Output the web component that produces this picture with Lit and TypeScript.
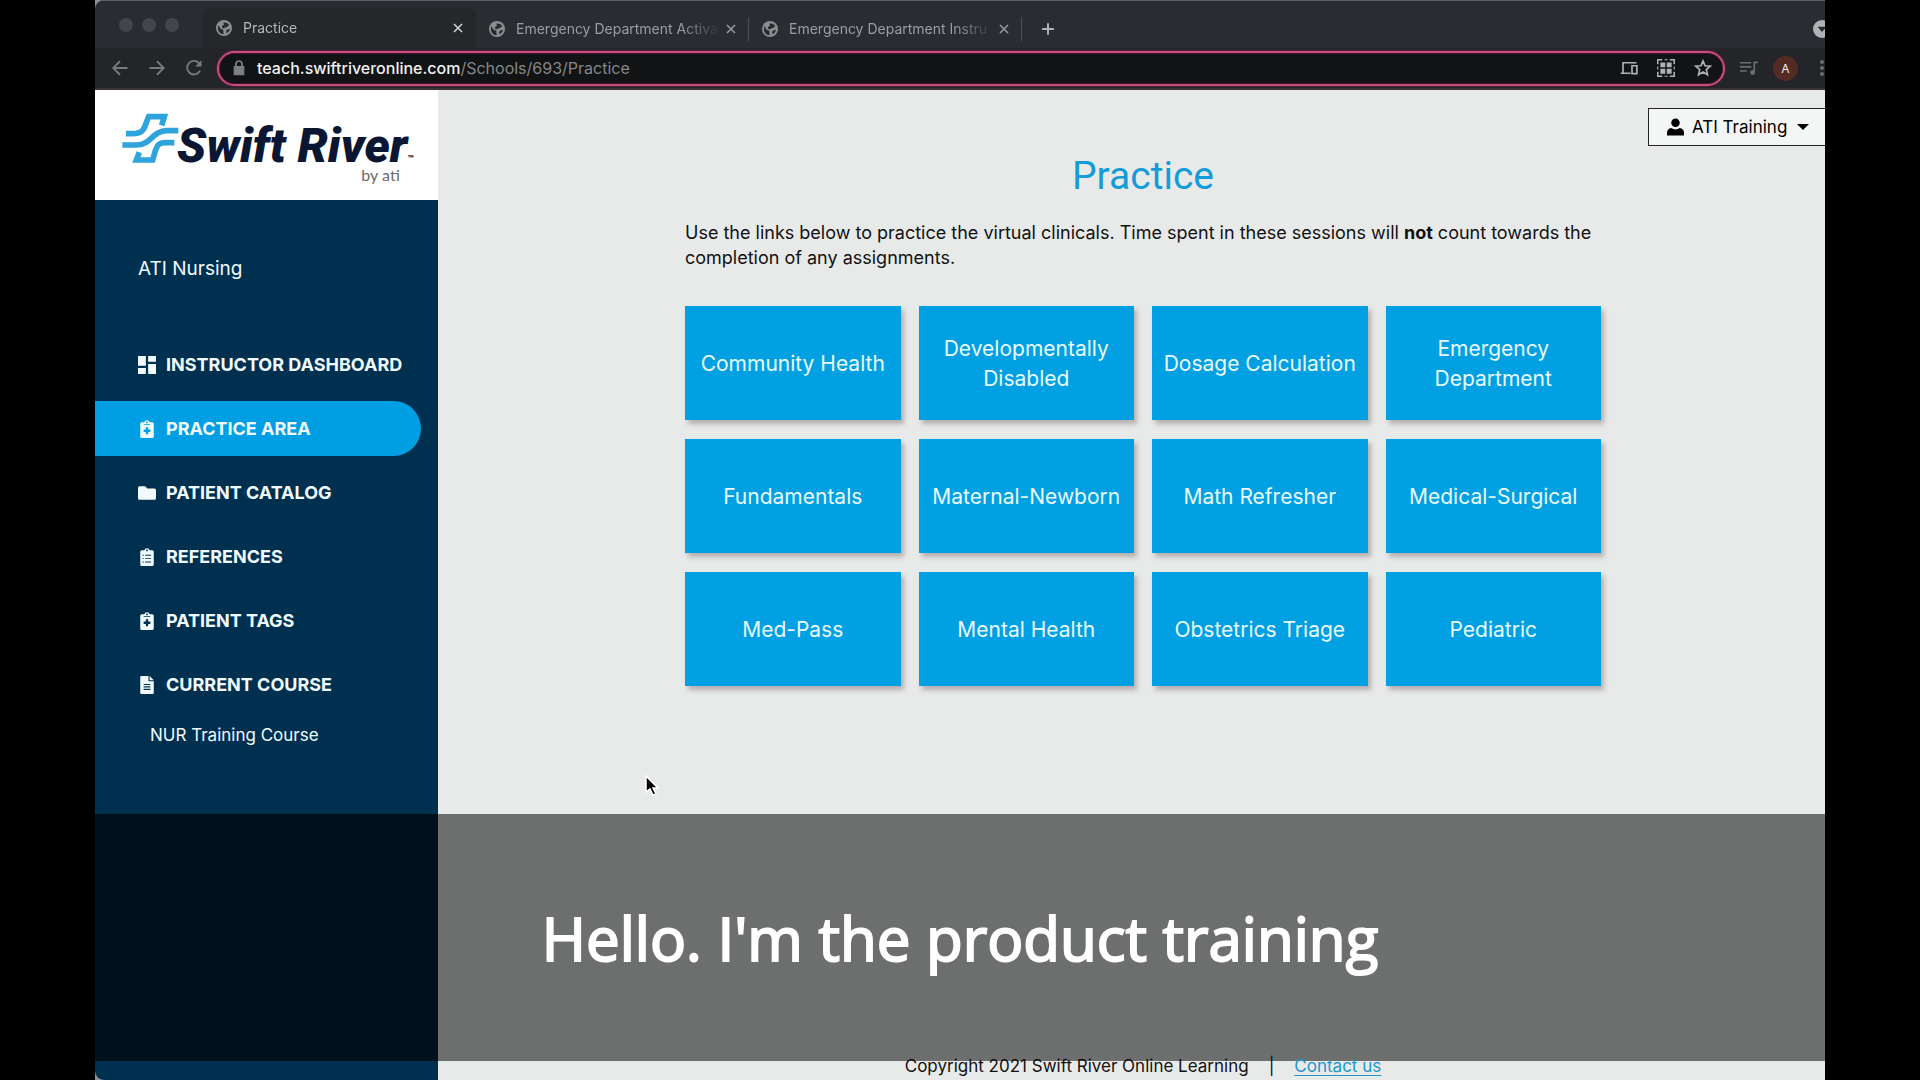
import { LitElement, html, svg, css } from "lit";
import { customElement, property } from "lit/decorators.js";
import { classMap } from "lit/directives/class-map.js";

const icons: Record<string, unknown> = {
  globe: svg`<circle cx="12" cy="12" r="12" fill="currentColor"/><path d="M3 8c3 2 2 5 6 6s1 4 3 7c-5 1-9-4-9-8zM11 4c3-1 7 0 9 4-2 0-2 3-5 3s-2 3-5 1 0-4 2-5zM16 15c2-1 4-2 5-1-1 3-3 5-5 6-1-2-1-4 0-5z" fill="#292a2d"/>`,
  close: svg`<path d="M4 4l16 16M20 4L4 20" stroke="currentColor" stroke-width="3" fill="none"/>`,
  plus: svg`<path d="M12 2v20M2 12h20" stroke="currentColor" stroke-width="3.400" fill="none"/>`,
  back: svg`<path d="M22 12H3M12 3l-9 9 9 9" stroke="currentColor" stroke-width="2.4" fill="none"/>`,
  forward: svg`<path d="M2 12h19M12 3l9 9-9 9" stroke="currentColor" stroke-width="2.4" fill="none"/>`,
  reload: svg`<path d="M20 15.500A9 9 0 1 1 18.500 5.500L21 8" stroke="currentColor" stroke-width="2.4" fill="none"/><path d="M22 1.500V10h-8.500z" fill="currentColor"/>`,
  lock: svg`<path d="M4 9h16v14H4z" fill="currentColor"/><path d="M7.500 10V6a4.500 4.500 0 0 1 9 0v4" stroke="currentColor" stroke-width="2.6" fill="none"/>`,
  devices: svg`<path d="M4 18V5h18M1 19h13M16 9h6.500v10.500H16z" stroke="currentColor" stroke-width="2.2" fill="none"/>`,
  qr: svg`<path d="M1 7V1h6M17 1h6v6M23 17v6h-6M7 23H1v-6" stroke="currentColor" stroke-width="2" fill="none"/><path d="M10 1h4M10 23h4M1 10v4M23 10v4" stroke="currentColor" stroke-width="1.500" fill="none"/><path d="M4.500 4.500h6.500V11H4.500zM13 4.500h6.500V11H13zM4.500 13h6.500v6.500H4.500zM13 13h6.500v6.500H13z" fill="currentColor"/>`,
  star: svg`<path d="M12 2.500l2.700 6.500 7 .6-5.300 4.600 1.600 6.900-6-3.700-6 3.700 1.600-6.900L2.300 9.600l7-.6z" stroke="currentColor" stroke-width="2.200" fill="none"/>`,
  playlist: svg`<path d="M0 5h15M0 10.500h15M0 16h9M19 18V4.500h5" stroke="currentColor" stroke-width="2.200" fill="none"/><circle cx="16.800" cy="18" r="3.200" fill="currentColor"/>`,
  dots: svg`<circle cx="12" cy="4" r="2.600" fill="currentColor"/><circle cx="12" cy="12" r="2.600" fill="currentColor"/><circle cx="12" cy="20" r="2.600" fill="currentColor"/>`,
  search: svg`<circle cx="12" cy="12" r="12" fill="currentColor"/><path d="M6 9h12l-6 7z" fill="#292a2d"/>`,
  dashboard: svg`<path d="M0 0h10.500v13H0zM13.500 0H24v7.500H13.500zM0 16h10.500v8H0zM13.500 10.500H24V24H13.500z" fill="currentColor"/>`,
  clipboardPlus: svg`<path fill-rule="evenodd" d="M5 3h3.500a3.600 3.600 0 0 1 7 0H19a2 2 0 0 1 2 2v17a2 2 0 0 1-2 2H5a2 2 0 0 1-2-2V5a2 2 0 0 1 2-2zM12 2a1.200 1.200 0 1 0 .01 0zM10.500 9.500v3h-3v3.500h3v3h3v-3h3v-3.500h-3v-3zM7.500 5.500v1h9v-1z" fill="currentColor"/>`,
  folder: svg`<path d="M2 3h7.500l3 3H22a2 2 0 0 1 2 2v11a2 2 0 0 1-2 2H2a2 2 0 0 1-2-2V5a2 2 0 0 1 2-2z" fill="currentColor"/>`,
  clipboardList: svg`<path fill-rule="evenodd" d="M5 3h3.500a3.600 3.600 0 0 1 7 0H19a2 2 0 0 1 2 2v17a2 2 0 0 1-2 2H5a2 2 0 0 1-2-2V5a2 2 0 0 1 2-2zM12 2a1.200 1.200 0 1 0 .01 0zM9.500 9v1.300h8V9zM9.500 13.500v1.300h8v-1.300zM9.500 18v1.300h8V18zM6 9v1.300h1.700V9zM6 13.500v1.300h1.700v-1.300zM6 18v1.300h1.700V18z" fill="currentColor"/>`,
  file: svg`<path fill-rule="evenodd" d="M4.500 0H14v7h7v15.500a1.500 1.500 0 0 1-1.500 1.500h-15A1.500 1.500 0 0 1 3 22.500v-21A1.500 1.500 0 0 1 4.500 0zM7.500 10.500v1.500h9v-1.500zM7.500 13.800v1.500h9v-1.500zM7.500 17v1.500h9V17z" fill="currentColor"/><path d="M15.500 0L21 5.500h-5.500z" fill="currentColor"/>`,
  user: svg`<circle cx="12" cy="6" r="6" fill="currentColor"/><path d="M0 24v-4a7 7 0 0 1 6-6.500 11 11 0 0 0 12 0 7 7 0 0 1 6 6.500v4z" fill="currentColor"/>`,
  caret: svg`<path d="M0 6h24L12 18z" fill="currentColor"/>`,
};

@customElement("ui-icon")
export class UiIcon extends LitElement {
  @property() name = "";
  static styles = css`
    :host { display: block; flex: none; width: 18px; height: 18px; }
    svg { display: block; width: 100%; height: 100%; overflow: visible; }
  `;
  render() {
    return html`<svg viewBox="0 0 24 24" aria-hidden="true">${icons[this.name]}</svg>`;
  }
}

@customElement("browser-chrome")
export class BrowserChrome extends LitElement {
  static styles = css`
    :host { display: block; color: #9a9da1; font-family: Inter, "Liberation Sans", sans-serif; }
    button { all: unset; display: flex; align-items: center; justify-content: center; cursor: pointer; }
    .strip { display: flex; height: 48px; box-sizing: border-box; border-top: 1px solid #5c6165; background: #292c30; }
    .lights { display: flex; flex: none; gap: 9px; width: 84px; padding: 17px 0 0 24px; }
    .light { width: 14px; height: 14px; border-radius: 50%; background: #42464a; }
    .tabs { display: flex; }
    .tab { display: flex; flex: none; align-items: center; box-sizing: border-box; width: 273px; height: 24px; margin-top: 16px; padding: 0 12px 0 13px; }
    .tab.active { height: 40px; margin-top: 7px; background: #25272b; border-radius: 8px 8px 0 0; color: #b4b6b9; }
    .tab ui-icon { width: 16px; height: 16px; color: #8b8e91; }
    .title { flex: 1; min-width: 0; margin: 0 8px 0 11px; overflow: hidden; white-space: nowrap; font-size: 14px; line-height: 20px; mask-image: linear-gradient(90deg, #000 165px, transparent 205px); }
    .tab button ui-icon { width: 12px; height: 12px; color: inherit; }
    .tab.active button { color: #d5d6d8; }
    .divided { border-right: 1px solid #4b4e52; padding-right: 11px; }
    .add { width: 52px; height: 48px; padding-top: 7px; box-sizing: border-box; color: #b0b3b5; }
    .add ui-icon { width: 14px; height: 14px; }
    .spacer { flex: 1; }
    .more { margin: 8px 17px 0 0; color: #b0b3b5; }
    .bar { display: flex; align-items: center; height: 42px; box-sizing: border-box; padding: 0 16px; background: #242529; border-bottom: 2px solid #3d3439; }
    .tools { display: flex; gap: 19px; width: 106px; color: #777a7d; }
    .address { display: flex; flex: 1; align-items: center; box-sizing: border-box; height: 35px; padding: 0 11px; border: 2px solid #c24f7e; box-shadow: inset 0 0 0 1px #4a102b, 0 0 0 1px #4f2036; border-radius: 18px; background: #111315; }
    .lock { width: 16px; height: 16px; margin: 0 10px 0 1px; color: #7d7f82; }
    .url { flex: 1; font-size: 16px; line-height: 24px; color: #85878a; }
    .url b { font-weight: 500; color: #f0f1f2; }
    .actions { display: flex; gap: 19px; color: #b0b3b5; }
    .after { display: flex; align-items: center; gap: 15px; padding: 0 1px 0 15px; color: #6b6e71; }
    .avatar { width: 25px; height: 25px; border-radius: 50%; background: #542a24; color: #eee; font-size: 12px; }
  `;
  private tabs = ["Practice", "Emergency Department Activa", "Emergency Department Instru"];
  render() {
    return html`
      <div class="strip">
        <div class="lights"><span class="light"></span><span class="light"></span><span class="light"></span></div>
        <div class="tabs">
          ${this.tabs.map((title, i) => html`
            <div class=${classMap({ tab: true, active: i === 0, divided: i > 0 })}>
              <ui-icon name="globe"></ui-icon><span class="title">${title}</span>
              <button aria-label="Close tab"><ui-icon name="close"></ui-icon></button>
            </div>`)}
        </div>
        <button class="add" aria-label="New tab"><ui-icon name="plus"></ui-icon></button>
        <span class="spacer"></span>
        <button class="more" aria-label="Search tabs"><ui-icon name="search"></ui-icon></button>
      </div>
      <div class="bar">
        <div class="tools">
          <button aria-label="Back"><ui-icon name="back"></ui-icon></button>
          <button aria-label="Forward"><ui-icon name="forward"></ui-icon></button>
          <button aria-label="Reload"><ui-icon name="reload"></ui-icon></button>
        </div>
        <div class="address">
          <ui-icon class="lock" name="lock"></ui-icon>
          <span class="url"><b>teach.swiftriveronline.com</b>/Schools/693/Practice</span>
          <div class="actions">
            <button aria-label="Send to device"><ui-icon name="devices"></ui-icon></button>
            <button aria-label="QR code"><ui-icon name="qr"></ui-icon></button>
            <button aria-label="Bookmark"><ui-icon name="star"></ui-icon></button>
          </div>
        </div>
        <div class="after">
          <button aria-label="Media"><ui-icon name="playlist"></ui-icon></button>
          <button class="avatar" aria-label="Profile">A</button>
          <button aria-label="Menu"><ui-icon name="dots"></ui-icon></button>
        </div>
      </div>`;
  }
}

@customElement("side-nav")
export class SideNav extends LitElement {
  static styles = css`
    :host { display: block; background: #00304f; color: #f1fbff; }
    .logo { display: flex; height: 110px; box-sizing: border-box; padding: 21px 0 0 26px; background: #fff; }
    .mark { flex: none; width: 58px; height: 52px; }
    .words { display: flex; flex-direction: column; align-items: flex-end; padding-top: 14px; margin-left: -2px; }
    .name { font-family: Roboto, "Liberation Sans", sans-serif; font-size: 48px; line-height: 41px; font-weight: 900; font-style: italic; color: #0b1632; white-space: nowrap; }
    .tm { font-size: 10px; line-height: 10px; font-style: normal; }
    .by { font-family: Lato, sans-serif; font-size: 16px; line-height: 18px; font-weight: 400; color: #6a6a6e; padding-right: 14px; }
    .school { margin: 0; padding: 54px 0 53px 43px; font-size: 19px; line-height: 30px; font-weight: 400; }
    .item { display: flex; align-items: center; gap: 10px; height: 55px; margin: 0 17px 9px 0; padding-left: 43px; border-radius: 0 28px 28px 0; font-size: 18px; font-weight: 700; color: inherit; text-decoration: none; white-space: nowrap; }
    .item.active { background: #009fe3; }
    .course { display: block; padding: 2px 0 0 55px; font-size: 17px; line-height: 24px; color: inherit; text-decoration: none; }
  `;
  private items: [string, string][] = [
    ["dashboard", "INSTRUCTOR DASHBOARD"],
    ["clipboardPlus", "PRACTICE AREA"],
    ["folder", "PATIENT CATALOG"],
    ["clipboardList", "REFERENCES"],
    ["clipboardPlus", "PATIENT TAGS"],
    ["file", "CURRENT COURSE"],
  ];
  render() {
    return html`
      <div class="logo">
        <svg class="mark" viewBox="0 0 174 156" aria-hidden="true">
          <g fill="none" stroke="#2ea3dc" stroke-width="17">
            <path d="M15 68H34C62 68 68 58 74 40L83 17H130L122 43"/>
            <path d="M172 59H138C92 59 92 102 46 102H4"/>
            <path d="M160 95H134C110 95 108 106 102 122L95 147H46L55 124"/>
          </g>
        </svg>
        <div class="words">
          <div class="name">Swift River<span class="tm">™</span></div>
          <div class="by">by ati</div>
        </div>
      </div>
      <h2 class="school">ATI Nursing</h2>
      <nav>
        ${this.items.map(([icon, label], i) => html`
          <a href="#" class=${classMap({ item: true, active: i === 1 })}><ui-icon name=${icon}></ui-icon>${label}</a>`)}
        <a href="#" class="course">NUR Training Course</a>
      </nav>`;
  }
}

@customElement("practice-page")
export class PracticePage extends LitElement {
  static styles = css`
    :host { display: flex; flex-direction: column; align-items: center; position: relative; box-sizing: border-box; padding-top: 62px; background: #e8eaea; color: #111; }
    .user { position: absolute; top: 18px; right: 0; display: flex; align-items: center; box-sizing: border-box; width: 200px; height: 38px; padding: 0 0 0 18px; border: 1px solid #222; background: #f4f6f5; color: #000; font: inherit; font-size: 17px; }
    .user ui-icon { width: 17px; margin-right: 8px; }
    .user .caret { width: 12px; height: 12px; margin: 0 0 0 10px; }
    .content { width: 916px; max-width: 100%; }
    h1 { margin: 0 0 20px; text-align: center; font-family: Roboto, sans-serif; font-size: 39px; line-height: 48px; font-weight: 400; color: #149cd8; }
    p { margin: 0 0 36px; font-size: 18px; line-height: 25px; }
    .cards { display: grid; grid-template-columns: repeat(4, 1fr); grid-auto-rows: 114px; gap: 19px 18px; }
    .card { display: flex; align-items: center; justify-content: center; padding: 2px 10px 0; background: #00a0e3; box-shadow: 3px 4px 5px rgba(90, 60, 60, 0.35); color: #e9fbff; font-size: 21px; line-height: 30px; text-align: center; text-decoration: none; }
    footer { display: flex; margin-top: auto; padding-bottom: 1px; font-size: 17px; line-height: 26px; z-index: 3; }
    footer span { margin: 0 20px; }
    footer a { color: #2196cb; text-underline-offset: 3px; }
  `;
  private labels = [
    "Community Health", "Developmentally Disabled", "Dosage Calculation", "Emergency Department",
    "Fundamentals", "Maternal-Newborn", "Math Refresher", "Medical-Surgical",
    "Med-Pass", "Mental Health", "Obstetrics Triage", "Pediatric",
  ];
  render() {
    return html`
      <button class="user"><ui-icon name="user"></ui-icon>ATI Training<ui-icon class="caret" name="caret"></ui-icon></button>
      <div class="content">
        <h1>Practice</h1>
        <p>Use the links below to practice the virtual clinicals. Time spent in these sessions will <b>not</b> count towards the completion of any assignments.</p>
        <div class="cards">${this.labels.map((l) => html`<a class="card" href="#">${l}</a>`)}</div>
      </div>
      <footer>Copyright 2021 Swift River Online Learning<span>|</span><a href="#">Contact us</a></footer>`;
  }
}

@customElement("app-root")
export class AppRoot extends LitElement {
  static styles = css`
    :host { display: block; min-height: 100vh; padding: 0 95px; background: #000; font-family: Inter, "Liberation Sans", sans-serif; }
    .stage { position: relative; overflow: hidden; min-height: 100vh; background: #8b9094; }
    .window { display: flex; flex-direction: column; width: calc(100% + 23px); min-height: 100vh; border-radius: 9px 0 0 9px; overflow: hidden; }
    .body { display: grid; flex: 1; grid-template-columns: 343px 1fr; }
    .caption { position: absolute; left: 0; right: 0; bottom: 19px; height: 247px; display: flex; align-items: center; justify-content: center; background: linear-gradient(90deg, rgba(0, 0, 0, 0.65) 343px, rgba(0, 0, 0, 0.53) 343px); color: #fff; font: 400 60px "Open Sans", sans-serif; -webkit-text-stroke: 2px #fff; white-space: nowrap; }
    .pointer { position: absolute; left: 550px; top: 775px; width: 14px; height: 22px; overflow: visible; }
  `;
  render() {
    return html`
      <div class="stage">
        <div class="window">
          <browser-chrome></browser-chrome>
          <div class="body"><side-nav></side-nav><practice-page></practice-page></div>
        </div>
        <div class="caption">Hello. I'm the product training</div>
        <svg class="pointer" viewBox="0 0 14 22" aria-hidden="true">
          <path d="M1 1v16l4-3 3 6 3-1-3-6h5z" fill="#000" stroke="#fff" stroke-width="1.500"/>
        </svg>
      </div>`;
  }
}
